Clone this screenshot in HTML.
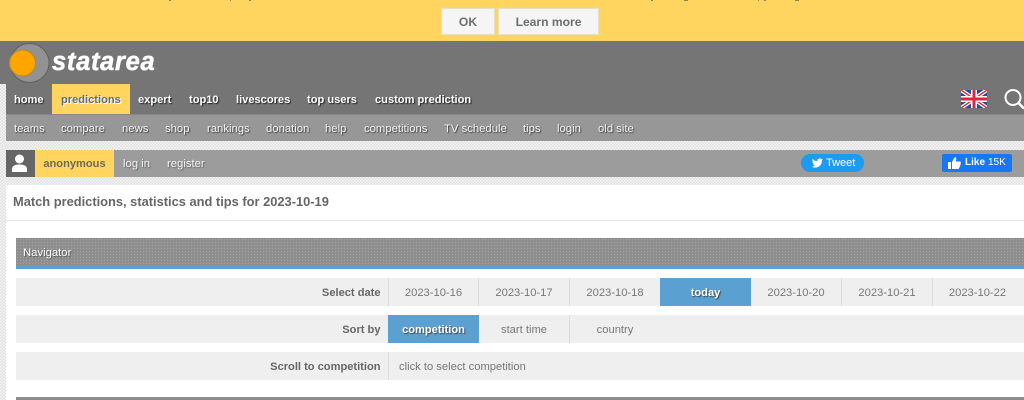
<!DOCTYPE html>
<html><head><meta charset="utf-8"><style>
html,body{margin:0;padding:0;width:1024px;height:400px;overflow:hidden;background:#fff}
body{position:relative;font-family:"Liberation Sans",sans-serif;font-size:11.200px;color:#666}
div,a{position:absolute;white-space:nowrap;box-sizing:border-box}
.n{top:84px;height:30px;line-height:32px;color:#fff;font-weight:bold;font-size:11.100px;text-shadow:1px 1px 1px #222}
.s{top:115px;height:26px;line-height:28px;color:#f2f2f2;font-size:11.300px;text-shadow:1px 1px 1px #444}
.r{left:16px;width:1008px;height:28px;background:#efefef}
.l{left:16px;width:364.500px;height:28px;line-height:30px;text-align:right;font-weight:bold;font-size:11.100px;color:#666}
.c{height:28px;line-height:30px;text-align:center;border-left:1px solid #dcdcdc;color:#777;font-size:11.200px}
.a{height:28px;line-height:30px;text-align:center;background:#5aa0d0;color:#fff;font-weight:bold;font-size:11.100px;text-shadow:1px 1px 1px #444}
.chk{background-color:#ececec;background-image:conic-gradient(#e0e0e0 25%,#f4f4f4 0 50%,#e0e0e0 0 75%,#f4f4f4 0);background-size:3px 3px}
.btn{top:8px;height:27px;line-height:26px;background:#f5f5f5;border:1px solid #e8e0c0;text-align:center;font-weight:bold;font-size:12.100px;color:#6e6e6e}
.m{top:0;width:2px;height:1px;background:#8d8468}
</style></head><body>
<div class="chk" style="left:0;top:84px;width:1024px;height:316px"></div>
<div style="left:0;top:0;width:1024px;height:41px;background:#ffd55f"></div>
<div class="m" style="left:169px"></div><div class="m" style="left:230px;width:1px"></div><div class="m" style="left:249px"></div><div class="m" style="left:651px"></div><div class="m" style="left:684px;width:4px"></div><div class="m" style="left:758px;width:1px"></div><div class="m" style="left:764px"></div><div class="m" style="left:795px;width:4px"></div>
<a class="btn" style="left:441px;width:54px">OK</a>
<a class="btn" style="left:498px;width:101px">Learn more</a>

<div style="left:0;top:41px;width:1024px;height:43px;background:#757575"></div>
<div style="left:6px;top:84px;width:1018px;height:30px;background:#757575"></div>
<div style="left:6px;top:114px;width:1018px;height:1px;background:#888"></div>
<div style="left:6px;top:115px;width:1018px;height:26px;background:#979797"></div>

<svg style="position:absolute;left:8px;top:42px" width="44" height="42" viewBox="0 0 44 42">
<circle cx="21.500" cy="21" r="19.500" fill="#929292" stroke="#5f5f5f" stroke-width="1"/>
<circle cx="14.500" cy="21" r="13" fill="#ffa500" stroke="#b98a28" stroke-width="1"/>
</svg>
<div style="left:52px;top:45px;height:34px;line-height:34px;font-size:25.500px;font-weight:bold;font-style:italic;color:#fff;letter-spacing:.7px;-webkit-text-stroke:.5px #fff">statarea</div>

<div class="n" style="left:14px">home</div>
<div style="left:52px;top:84px;width:78px;height:30px;background:#ffd55f"></div>
<div class="n" style="left:61px;color:#5d6b85;text-shadow:1px 1px 0 #fff">predictions</div>
<div class="n" style="left:138px">expert</div>
<div class="n" style="left:189px">top10</div>
<div class="n" style="left:236px">livescores</div>
<div class="n" style="left:307px">top users</div>
<div class="n" style="left:375px">custom prediction</div>

<svg style="position:absolute;left:961px;top:90px" width="26" height="18" viewBox="0 0 26 18">
<rect width="26" height="18" fill="#2a4a95"/>
<path d="M0 0L26 18M26 0L0 18" stroke="#fff" stroke-width="4"/>
<path d="M0 0L26 18M26 0L0 18" stroke="#e0263c" stroke-width="1.400"/>
<path d="M13 0V18M0 9H26" stroke="#fff" stroke-width="6"/>
<path d="M13 0V18M0 9H26" stroke="#e0263c" stroke-width="3"/>
</svg>
<svg style="position:absolute;left:1003px;top:88px" width="21" height="22" viewBox="0 0 21 22">
<circle cx="10" cy="9.500" r="7.500" fill="none" stroke="#fff" stroke-width="2"/>
<path d="M15.500 15L21 20.500" stroke="#fff" stroke-width="2.500"/>
</svg>

<div class="s" style="left:14px">teams</div>
<div class="s" style="left:61px">compare</div>
<div class="s" style="left:122px">news</div>
<div class="s" style="left:165px">shop</div>
<div class="s" style="left:207px">rankings</div>
<div class="s" style="left:266px">donation</div>
<div class="s" style="left:325px">help</div>
<div class="s" style="left:364px">competitions</div>
<div class="s" style="left:444px">TV schedule</div>
<div class="s" style="left:523px">tips</div>
<div class="s" style="left:557px">login</div>
<div class="s" style="left:598px">old site</div>

<div style="left:6px;top:150px;width:1018px;height:27px;background:#9c9c9c"></div>
<div style="left:6px;top:150px;width:29px;height:27px;background:#666"></div>
<svg style="position:absolute;left:11px;top:154px" width="19" height="19" viewBox="0 0 19 19">
<circle cx="8.500" cy="5" r="4.500" fill="#fff"/>
<path d="M1 18V15C1 12 4 10.500 8.500 10.500S16 12 16 15V18Z" fill="#fff"/>
</svg>
<div style="left:35px;top:150px;width:79px;height:27px;line-height:29px;background:#ffd55f;text-align:center;font-weight:bold;color:#6b6b5a;font-size:11.100px">anonymous</div>
<div style="left:123px;top:150px;height:27px;line-height:29px;font-size:11.300px;color:#f5f5f5;text-shadow:1px 1px 1px #666">log in</div>
<div style="left:167px;top:150px;height:27px;line-height:29px;font-size:11.300px;color:#f5f5f5;text-shadow:1px 1px 1px #666">register</div>

<div style="left:801px;top:154px;width:63px;height:18px;border-radius:9px;background:#1d9bf0"></div>
<svg style="position:absolute;left:811px;top:157px" width="13" height="12" viewBox="0 0 24 24"><path fill="#fff" d="M23 5c-.8.400-1.700.600-2.600.700.900-.600 1.700-1.400 2-2.500-.900.500-1.900.900-2.900 1.100a4.600 4.600 0 0 0-7.800 4.200C7.900 8.300 4.500 6.500 2.200 3.700c-1.200 2.100-.600 4.800 1.400 6.100-.700 0-1.400-.200-2-.600 0 2.200 1.500 4.200 3.700 4.600-.700.200-1.400.200-2.100.100.600 1.900 2.300 3.200 4.300 3.200A9.300 9.300 0 0 1 .7 19a13 13 0 0 0 20-11.600c.900-.600 1.700-1.400 2.300-2.400z"/></svg>
<div style="left:826px;top:154px;height:18px;line-height:18px;color:#fff;font-size:11px">Tweet</div>

<div style="left:942px;top:154px;width:70px;height:18px;border-radius:2px;background:#1877f2"></div>
<svg style="position:absolute;left:948px;top:156px" width="13" height="14" viewBox="0 0 13 14"><path fill="#fff" d="M0 6H3V13H0ZM4 6L6.500 1.500C7.500 .5 8.500 1.500 8.300 3L8 5.500H12C13 5.500 13 7 12.500 7.500C13 8.500 12.500 9 12 9.500C12.300 10.500 11.800 11 11.300 11.300C11.300 12.500 10.800 13 10 13H4Z"/></svg>
<div style="left:965px;top:154px;height:18px;line-height:18px;color:#fff;font-size:10px;font-weight:bold">Like</div>
<div style="left:988px;top:154px;height:18px;line-height:18px;color:#fff;font-size:10px">15K</div>

<div style="left:6px;top:185px;width:1018px;height:215px;background:#fff"></div>
<div style="left:13px;top:193px;height:18px;line-height:18px;font-size:12.870px;font-weight:bold;color:#666">Match predictions, statistics and tips for 2023-10-19</div>
<div style="left:6px;top:220px;width:1018px;height:1px;background:#e8e8e8"></div>

<div style="left:16px;top:238px;width:1008px;height:28px;background-color:#8e8e8e;background-image:radial-gradient(#a2a2a2 .7px,transparent .8px);background-size:3px 3px"></div>
<div style="left:23px;top:238px;height:28px;line-height:30px;color:#fff;font-size:11.300px;text-shadow:1px 1px 1px #555">Navigator</div>
<div style="left:16px;top:266px;width:1008px;height:3px;background:#5aa0d0"></div>

<div class="r" style="top:278px"></div>
<div class="l" style="top:278px">Select date</div>
<div class="c" style="top:278px;left:388px;width:90px">2023-10-16</div>
<div class="c" style="top:278px;left:478px;width:91px">2023-10-17</div>
<div class="c" style="top:278px;left:569px;width:91px">2023-10-18</div>
<div class="a" style="top:278px;left:660px;width:91px">today</div>
<div class="c" style="top:278px;left:751px;width:90px;border-left:0">2023-10-20</div>
<div class="c" style="top:278px;left:841px;width:91px">2023-10-21</div>
<div class="c" style="top:278px;left:932px;width:90px">2023-10-22</div>

<div class="r" style="top:315px"></div>
<div class="l" style="top:315px">Sort by</div>
<div class="a" style="top:315px;left:388px;width:91px">competition</div>
<div class="c" style="top:315px;left:479px;width:90px;border-left:0">start time</div>
<div class="c" style="top:315px;left:569px;width:91px">country</div>

<div class="r" style="top:352px"></div>
<div class="l" style="top:352px">Scroll to competition</div>
<div class="c" style="top:352px;left:388px;width:636px;text-align:left;padding-left:10px">click to select competition</div>

<div style="left:16px;top:397px;width:1008px;height:3px;background:#8e8e8e"></div>
</body></html>
